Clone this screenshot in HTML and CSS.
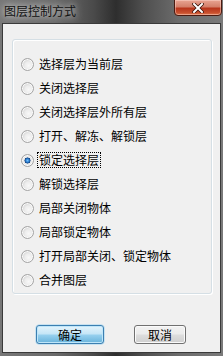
FILE: index.html
```html
<!DOCTYPE html>
<html lang="zh-CN">
<head>
    <meta charset="UTF-8">
    <title>图层控制方式</title>
    <link rel="stylesheet" href="styles.css">
</head>
<body>
    <div class="window">
        <!-- 標題列 -->
        <div class="titlebar">
            <span class="title">图层控制方式</span>
            <button class="close" title="关闭">
                <svg width="12" height="10" viewBox="0 0 12 10">
                    <path d="M2 1 L10 9 M10 1 L2 9" stroke="#3b1208" stroke-width="3.6" stroke-linecap="square"/>
                    <path d="M2 1 L10 9 M10 1 L2 9" stroke="#ffffff" stroke-width="2" stroke-linecap="square"/>
                </svg>
            </button>
        </div>

        <!-- 內容 -->
        <div class="client">
            <div class="group">
                <label class="option"><span class="radio"></span><span class="text">选择层为当前层</span></label>
                <label class="option"><span class="radio"></span><span class="text">关闭选择层</span></label>
                <label class="option"><span class="radio"></span><span class="text">关闭选择层外所有层</span></label>
                <label class="option"><span class="radio"></span><span class="text">打开、解冻、解锁层</span></label>
                <label class="option checked"><span class="radio"></span><span class="text focus">锁定选择层</span></label>
                <label class="option"><span class="radio"></span><span class="text">解锁选择层</span></label>
                <label class="option"><span class="radio"></span><span class="text">局部关闭物体</span></label>
                <label class="option"><span class="radio"></span><span class="text">局部锁定物体</span></label>
                <label class="option"><span class="radio"></span><span class="text">打开局部关闭、锁定物体</span></label>
                <label class="option"><span class="radio"></span><span class="text">合并图层</span></label>
            </div>

            <div class="buttons">
                <button class="btn default">确定</button>
                <button class="btn">取消</button>
            </div>
        </div>
    </div>
</body>
</html>
```

FILE: styles.css
```css
* {
    margin: 0;
    padding: 0;
    box-sizing: border-box;
}

body {
    width: 223px;
    height: 356px;
    overflow: hidden;
    font-family: "Noto Sans CJK SC", "Noto Sans", sans-serif;
    font-size: 12px;
    color: #000;
}

/* 視窗外框 - Win7 玻璃效果 */
.window {
    width: 223px;
    height: 356px;
    display: flex;
    flex-direction: column;
    background: linear-gradient(90deg, #777 0%, #6a6a6a 25%, #4a4a4a 42%, #2e2e2e 52%, #4e4e4e 64%, #6c6c6c 80%, #7a7a7a 100%);
}

.titlebar {
    height: 23px;
    display: flex;
    justify-content: space-between;
    align-items: flex-start;
    padding-left: 4px;
    padding-right: 1px;
}

.title {
    margin-top: 3px;
    line-height: 16px;
    color: #111;
    text-shadow: 0 0 6px rgba(255, 255, 255, 0.7), 0 0 10px rgba(255, 255, 255, 0.5);
}

.close {
    width: 48px;
    height: 17px;
    margin-top: -1px;
    border: 1px solid #4a1a10;
    border-radius: 0 0 4px 4px;
    background: linear-gradient(180deg, #e8a493 0%, #d47f6a 45%, #b8351c 55%, #c8502e 85%, #e07a50 100%);
    box-shadow: inset 0 0 0 1px rgba(255, 220, 210, 0.45);
    display: flex;
    justify-content: center;
    align-items: center;
}

.client {
    flex: 1;
    margin: 0 2px 3px 2px;
    border: 1px solid #3a3a3a;
    background: #f0f0f0;
    display: flex;
    flex-direction: column;
}

/* 群組框 */
.group {
    margin: 15px 8px 0 9px;
    height: 255px;
    border: 1px solid #d5dfe5;
    border-radius: 3px;
    box-shadow: inset 1px 1px 0 #fff, 1px 1px 0 #fff;
    padding: 12px 0 0 8px;
}

.option {
    height: 24px;
    display: flex;
    align-items: center;
    gap: 3px;
}

.radio {
    width: 13px;
    height: 13px;
    border-radius: 50%;
    border: 1px solid #a4a4a4;
    background: radial-gradient(circle at 60% 60%, #f8f8f8 0%, #ececec 40%, #d2d2d2 75%, #e2e2e2 100%);
    box-shadow: inset 0 0 0 1px #fafafa;
    flex-shrink: 0;
}

.option.checked .radio {
    background: radial-gradient(circle at 50% 50%, #6fc0ff 0%, #2d7fd0 22%, #0f3f7e 36%, #f0f0f0 42%, #d4d4d4 80%, #e0e0e0 100%);
}

.text {
    line-height: 14px;
    padding: 0 1px;
    border: 1px solid transparent;
}

.text.focus {
    border: 1px dotted #000;
}

.buttons {
    display: flex;
    gap: 30px;
    padding-left: 33px;
    margin-top: 31px;
}

.btn {
    height: 19px;
    font-family: inherit;
    font-size: 12px;
    border: 1px solid #707070;
    border-radius: 3px;
    background: linear-gradient(180deg, #f2f2f2 0%, #ebebeb 48%, #dddddd 52%, #cfcfcf 100%);
    box-shadow: inset 0 0 0 1px #fafafa;
    width: 52px;
    line-height: 15px;
}

.btn.default {
    width: 68px;
    border-color: #3c7fb1;
    background: linear-gradient(180deg, #e5f4fc 0%, #c4e5f6 48%, #98d1ef 52%, #68b3db 100%);
    box-shadow: inset 0 0 0 1px #bfe6f9, 0 0 0 0.5px #9fd4f0;
}
```
